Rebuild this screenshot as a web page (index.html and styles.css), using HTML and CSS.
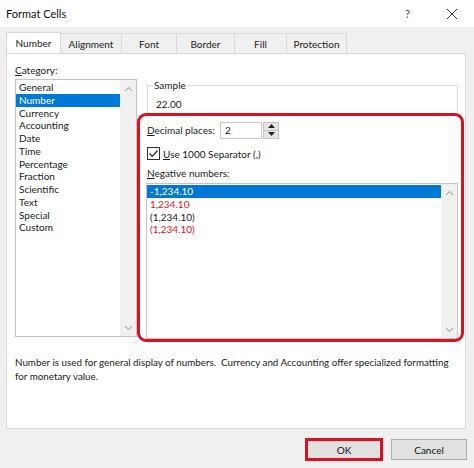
FILE: index.html
```html
<!DOCTYPE html>
<html lang="en">
<head>
<meta charset="utf-8">
<title>Format Cells</title>
<link rel="stylesheet" href="styles.css">
</head>
<body>
<div class="window">
  <div class="titlebar">
    <span class="title">Format Cells</span>
    <span class="help">?</span>
    <svg class="close" width="12" height="12" viewBox="0 0 12 12"><path d="M1 1 L11 11 M11 1 L1 11" stroke="#333" stroke-width="1" fill="none"/></svg>
  </div>

  <div class="tabs">
    <div class="tab active">Number</div>
    <div class="tab">Alignment</div>
    <div class="tab">Font</div>
    <div class="tab">Border</div>
    <div class="tab">Fill</div>
    <div class="tab">Protection</div>
  </div>

  <div class="panel">
    <div class="columns">
      <div class="col-left">
        <div class="label"><u>C</u>ategory:</div>
        <div class="listbox cat-list">
          <div class="items">
            <div class="item">General</div>
            <div class="item selected">Number</div>
            <div class="item">Currency</div>
            <div class="item">Accounting</div>
            <div class="item">Date</div>
            <div class="item">Time</div>
            <div class="item">Percentage</div>
            <div class="item">Fraction</div>
            <div class="item">Scientific</div>
            <div class="item">Text</div>
            <div class="item">Special</div>
            <div class="item">Custom</div>
          </div>
          <div class="scrollbar">
            <svg width="9" height="6" viewBox="0 0 9 6"><polyline points="1,5 4.5,1.5 8,5" fill="none" stroke="#b4b4b4" stroke-width="1.2"/></svg>
            <svg width="9" height="6" viewBox="0 0 9 6"><polyline points="1,1 4.5,4.5 8,1" fill="none" stroke="#b4b4b4" stroke-width="1.2"/></svg>
          </div>
        </div>
      </div>

      <div class="col-right">
        <fieldset class="sample">
          <legend>Sample</legend>
          <div class="sample-value">22.00</div>
        </fieldset>

        <div class="options">
          <div class="row decimal-row">
            <span class="row-label"><u>D</u>ecimal places:</span>
            <div class="spin">
              <div class="spin-input">2</div>
              <div class="spin-buttons">
                <div class="spin-btn"><svg width="7" height="4" viewBox="0 0 7 4"><polygon points="0,4 3.5,0 7,4" fill="#222"/></svg></div>
                <div class="spin-btn"><svg width="7" height="4" viewBox="0 0 7 4"><polygon points="0,0 3.5,4 7,0" fill="#222"/></svg></div>
              </div>
            </div>
          </div>

          <div class="row check-row">
            <span class="checkbox"><svg width="11" height="11" viewBox="0 0 11 11"><polyline points="1.5,5.5 4.2,8.3 9.5,2.5" fill="none" stroke="#222" stroke-width="1.2"/></svg></span>
            <span class="check-label"><u>U</u>se 1000 Separator (,)</span>
          </div>

          <div class="label neg-label"><u>N</u>egative numbers:</div>

          <div class="listbox neg-list">
            <div class="items">
              <div class="item selected">-1,234.10</div>
              <div class="item red">1,234.10</div>
              <div class="item">(1,234.10)</div>
              <div class="item red">(1,234.10)</div>
            </div>
            <div class="scrollbar">
              <svg width="9" height="6" viewBox="0 0 9 6"><polyline points="1,5 4.5,1.5 8,5" fill="none" stroke="#b4b4b4" stroke-width="1.2"/></svg>
              <svg width="9" height="6" viewBox="0 0 9 6"><polyline points="1,1 4.5,4.5 8,1" fill="none" stroke="#b4b4b4" stroke-width="1.2"/></svg>
            </div>
          </div>

          <div class="annotation"></div>
        </div>
      </div>
    </div>

    <p class="description">Number is used for general display of numbers.&nbsp; Currency and Accounting offer specialized formatting<br>for monetary value.</p>
  </div>

  <div class="buttons">
    <button class="btn ok">OK</button>
    <button class="btn">Cancel</button>
  </div>
</div>
</body>
</html>
```

FILE: styles.css
```css
* { box-sizing: border-box; }

html, body {
  margin: 0;
  padding: 0;
}

body {
  width: 474px;
  height: 468px;
  background: #f0f0f0;
  font-family: "Lato", "Noto Sans", "Liberation Sans", sans-serif;
  font-size: 10px;
  color: #1a1a1a;
  overflow: hidden;
}

.window {
  width: 474px;
  height: 468px;
  display: flex;
  flex-direction: column;
}

/* title bar */
.titlebar {
  height: 27px;
  background: #fff;
  display: flex;
  align-items: center;
  padding-left: 6px;
}

.title {
  font-size: 11px;
  color: #111;
  flex: 1;
}

.help {
  font-size: 11px;
  color: #444;
  margin-right: 36px;
}

.close {
  margin-right: 16px;
}

/* tabs */
.tabs {
  margin-top: 6px;
  padding-left: 6px;
  display: grid;
  grid-template-columns: 55px 61px 55px 58px 52px 60px;
  height: 20px;
  position: relative;
  z-index: 1;
}

.tab {
  height: 20px;
  border: 1px solid #d9d9d9;
  border-left: none;
  border-bottom: none;
  display: flex;
  align-items: center;
  justify-content: center;
  color: #222;
  background: #f0f0f0;
}

.tab.active {
  background: #fff;
  border-left: 1px solid #d9d9d9;
  height: 21px;
  margin-top: -1px;
}

/* main panel */
.panel {
  margin: 0 8px 0 6px;
  height: 376px;
  background: #fff;
  border: 1px solid #d9d9d9;
  padding: 10px 7px 0 8px;
}

.columns {
  display: grid;
  grid-template-columns: 122px 312px;
  column-gap: 9px;
}

.label {
  line-height: 13px;
  height: 13px;
}

.listbox {
  border: 1px solid #c4c4c4;
  display: flex;
  background: #fff;
}

.items {
  flex: 1;
  padding-top: 1px;
}

.item {
  height: 12.75px;
  line-height: 12.75px;
  padding-left: 3px;
  white-space: nowrap;
}

.item.selected {
  background: #0078d7;
  color: #fff;
}

.item.red {
  color: #e8111c;
}

.scrollbar {
  width: 16px;
  background: #f0f0f0;
  display: flex;
  flex-direction: column;
  justify-content: space-between;
  align-items: center;
  padding: 6px 0 5px;
}

.cat-list {
  margin-top: 2px;
  height: 258px;
}

/* right column */
.col-right {
  display: flex;
  flex-direction: column;
}

.sample {
  margin: 15px 0 0 1px;
  padding: 0 0 2px 8px;
  border: 1px solid #dcdcdc;
  min-width: 0;
}

.sample legend {
  padding: 0 1px;
  margin-left: -3px;
  line-height: 13px;
  color: #222;
}

.sample-value {
  line-height: 13px;
  padding-top: 6px;
}

.options {
  position: relative;
  display: flex;
  flex-direction: column;
}

.row {
  display: flex;
  align-items: center;
  margin-left: 1px;
}

.decimal-row {
  margin-top: 7px;
  height: 18px;
}

.row-label {
  width: 73px;
}

.spin {
  display: flex;
  height: 17px;
}

.spin-input {
  width: 42px;
  height: 17px;
  border: 1px solid #c8c8c8;
  padding-left: 4px;
  line-height: 15px;
}

.spin-buttons {
  width: 16px;
  display: flex;
  flex-direction: column;
  margin-left: 1px;
}

.spin-btn {
  flex: 1;
  background: #e5e5e5;
  border: 1px solid #c4c4c4;
  display: flex;
  align-items: center;
  justify-content: center;
}

.spin-btn + .spin-btn {
  border-top: none;
}

.check-row {
  margin-top: 8px;
  height: 13px;
}

.checkbox {
  width: 13px;
  height: 13px;
  border: 1px solid #333;
  display: flex;
  align-items: center;
  justify-content: center;
  margin-right: 3px;
}

.neg-label {
  margin-top: 7px;
  margin-left: 1px;
}

.neg-list {
  margin-top: 3px;
  height: 156px;
}

/* red annotation frame drawn over the options */
.annotation {
  position: absolute;
  top: -1px;
  left: -9px;
  right: -6px;
  bottom: -3px;
  border: 3px solid #dc1020;
  border-radius: 9px;
  pointer-events: none;
}

.description {
  margin: 17px 0 0 0;
  line-height: 13.5px;
  font-size: 9.8px;
  color: #222;
}

/* buttons */
.buttons {
  display: flex;
  justify-content: flex-end;
  gap: 9px;
  padding-right: 7px;
  margin-top: 10px;
}

.btn {
  width: 76px;
  height: 21px;
  background: #e1e1e1;
  border: 1px solid #adadad;
  font-family: inherit;
  font-size: 10px;
  color: #111;
  padding: 0;
}

.btn.ok {
  outline: 3px solid #dc1020;
  outline-offset: -2px;
}
```
